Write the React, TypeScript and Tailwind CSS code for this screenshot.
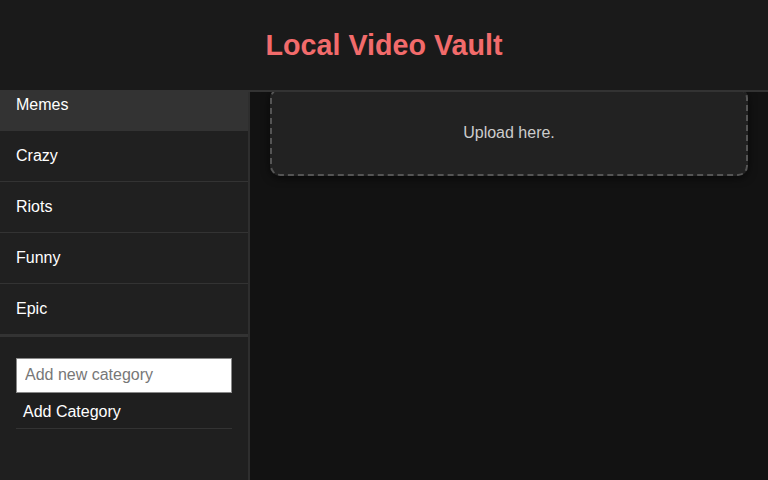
import React from 'react'

const categories = ['Memes', 'Crazy', 'Riots', 'Funny', 'Epic']

export default function App() {
  const active = 'Memes'
  return (
    <div className="h-[480px] w-full flex flex-col bg-[#121212] font-['Liberation_Sans',Arial,sans-serif] overflow-hidden">
      {/* Header */}
      <header className="h-[92px] shrink-0 bg-[#1a1a1a] border-b-2 border-[#333] flex items-center justify-center">
        <h1 className="text-[28.7px] font-bold text-[#f26b6b] mt-[2px]">Local Video Vault</h1>
      </header>

      <div className="flex flex-1 min-h-0">
        {/* Sidebar */}
        <aside className="w-[250px] shrink-0 bg-[#1f1f1f] border-r-2 border-[#2e2e2e] overflow-hidden">
          <ul className="-mt-[12px] border-b-2 border-[#333]">
            {categories.map((cat) => (
              <li
                key={cat}
                className={`h-[51px] px-4 flex items-center border-b border-[#333] text-base text-white ${
                  cat === active ? 'bg-[#333]' : 'bg-[#202020]'
                }`}
              >
                {cat}
              </li>
            ))}
          </ul>
          <div className="px-4 pt-[21px]">
            <input
              type="text"
              placeholder="Add new category"
              className="w-full h-[35px] px-2 pb-[2px] bg-white border border-[#888] text-base text-black placeholder:text-[#777] outline-none"
            />
            <button className="w-full h-[36px] px-[7px] pt-[3px] text-left text-base text-white border-b border-[#333]">
              Add Category
            </button>
          </div>
        </aside>

        {/* Main */}
        <main className="flex-1 px-5 overflow-hidden">
          <div className="-mt-[4px] h-[88px] rounded-[10px] border-2 border-dashed border-[#555] bg-[#222] shadow-[0_2px_8px_rgba(0,0,0,0.6)] flex items-center justify-center">
            <p className="text-base text-[#ccc] pt-[2px]">Upload here.</p>
          </div>
        </main>
      </div>
    </div>
  )
}
